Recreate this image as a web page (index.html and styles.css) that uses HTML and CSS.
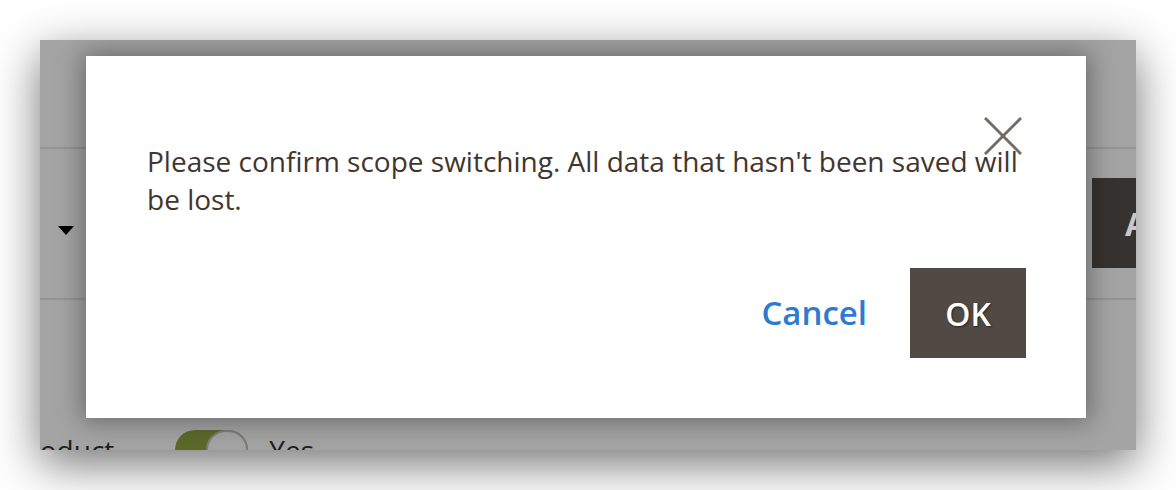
FILE: index.html
```html
<!DOCTYPE html>
<html lang="en">
<head>
<meta charset="utf-8">
<title>Confirm scope switching</title>
<link rel="stylesheet" href="styles.css">
</head>
<body>
<div class="frame">
  <div class="page">
    <div class="page-head"></div>
    <div class="toolbar">
      <span class="caret"></span>
      <button class="dark-btn" type="button">Add Attribute</button>
    </div>
    <div class="field-row">
      <span class="field-label">Enable Product</span>
      <span class="toggle"><span class="knob"></span></span>
      <span class="toggle-text">Yes</span>
    </div>
  </div>

  <div class="modal" role="dialog">
    <button class="modal-close" type="button" aria-label="Close">
      <svg width="38" height="38" viewBox="0 0 38 38">
        <path d="M1 1 L37 37 M37 1 L1 37" stroke="#736c66" stroke-width="3" fill="none"/>
      </svg>
    </button>
    <div class="modal-content">Please confirm scope switching. All data that hasn't been saved will be lost.</div>
    <div class="modal-footer">
      <button class="btn-cancel" type="button">Cancel</button>
      <button class="btn-ok" type="button">OK</button>
    </div>
  </div>
</div>
</body>
</html>
```
FILE: styles.css
```css
* { box-sizing: border-box; }

html, body {
  margin: 0;
  padding: 0;
  background: #ffffff;
}

body {
  min-height: 490px;
  padding: 40px 40px 0 40px;
  font-family: "Open Sans", "DejaVu Sans", sans-serif;
}

.frame {
  position: relative;
  width: 1096px;
  height: 410px;
  background: #a4a4a4;
  overflow: hidden;
  box-shadow: 0 14px 44px rgba(0, 0, 0, 0.55);
}

.page {
  display: flex;
  flex-direction: column;
}

.page-head {
  height: 109px;
  border-bottom: 2px solid #959595;
}

.toolbar {
  height: 151px;
  border-bottom: 2px solid #959595;
  display: flex;
  align-items: flex-start;
  padding-left: 18px;
}

.caret {
  margin-top: 77px;
  width: 0;
  height: 0;
  border-left: 8px solid transparent;
  border-right: 8px solid transparent;
  border-top: 9px solid #000000;
}

.dark-btn {
  margin-top: 29px;
  margin-left: auto;
  margin-right: -160px;
  width: 204px;
  height: 90px;
  border: 0;
  padding: 0 0 0 33px;
  background: #36322f;
  color: #c8c8c8;
  font-family: "Open Sans", "DejaVu Sans", sans-serif;
  font-weight: 700;
  font-size: 32px;
  text-align: left;
  white-space: nowrap;
  overflow: hidden;
}

.field-row {
  display: flex;
  align-items: center;
  padding-top: 130px;
  margin-left: -124px;
}

.field-label {
  font-size: 28px;
  line-height: 40px;
  color: #1f1f1f;
  white-space: nowrap;
  margin-right: 61px;
}

.toggle {
  position: relative;
  width: 73px;
  height: 40px;
  border-radius: 20px;
  background: #5b6a2b;
  margin-right: 21px;
}

.knob {
  position: absolute;
  right: 0;
  top: 0;
  width: 42px;
  height: 40px;
  border-radius: 21px;
  background: #a4a4a4;
  border: 2px solid #7e7e7e;
}

.toggle-text {
  font-size: 28px;
  line-height: 40px;
  color: #1f1f1f;
}

.modal {
  position: absolute;
  left: 46px;
  top: 16px;
  width: 1000px;
  height: 362px;
  background: #ffffff;
  box-shadow: 0 0 24px 4px rgba(0, 0, 0, 0.35);
  display: flex;
  flex-direction: column;
}

.modal-close {
  position: absolute;
  left: 898px;
  top: 61px;
  width: 38px;
  height: 38px;
  padding: 0;
  border: 0;
  background: transparent;
  display: block;
}

.modal-close svg { display: block; }

.modal-content {
  padding: 86px 60px 0 61px;
  font-size: 28px;
  line-height: 38px;
  color: #41362f;
}

.modal-footer {
  display: flex;
  justify-content: flex-end;
  align-items: center;
  margin-top: 50px;
  padding-right: 60px;
}

.btn-cancel {
  border: 0;
  background: transparent;
  padding: 0;
  margin-right: 43px;
  font-family: "Open Sans", "DejaVu Sans", sans-serif;
  font-weight: 600;
  font-size: 33px;
  line-height: 44px;
  color: #2f7ad1;
}

.btn-ok {
  width: 116px;
  height: 90px;
  border: 0;
  padding: 0;
  background: #514943;
  color: #ffffff;
  font-family: "Open Sans", "DejaVu Sans", sans-serif;
  font-weight: 600;
  font-size: 32px;
  text-shadow: 1px 1px 2px rgba(0, 0, 0, 0.5);
}
```
